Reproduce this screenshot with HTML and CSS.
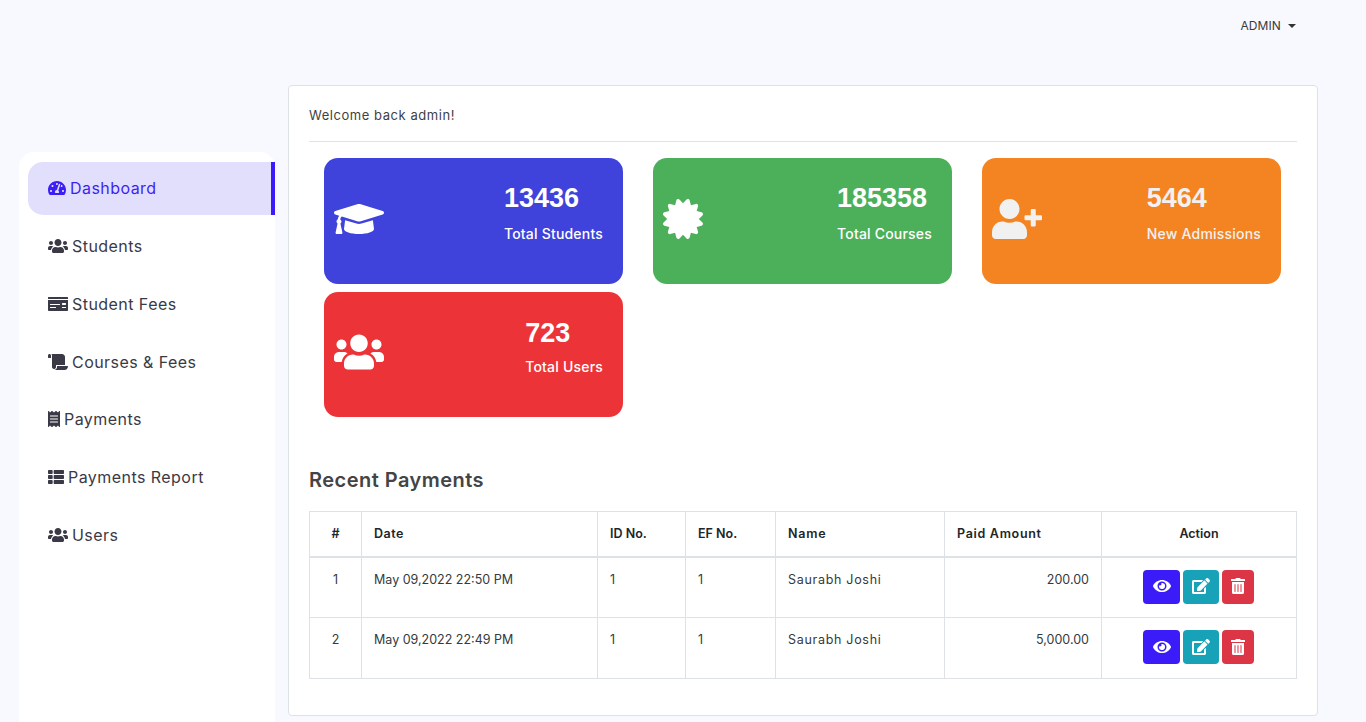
FILE: index.html
```html
<!DOCTYPE html>
<html lang="en">
<head>
<meta charset="utf-8">
<title>Dashboard</title>
<link rel="stylesheet" href="styles.css">
</head>
<body>
<svg class="sprites" width="0" height="0" aria-hidden="true">
<defs>
<symbol id="i-gauge" viewBox="0 0 576 512"><path d="M288 32C128.94 32 0 160.94 0 320c0 52.8 14.25 102.26 39.06 144.8 5.61 9.62 16.3 15.2 27.44 15.2h443c11.14 0 21.83-5.58 27.44-15.2C561.75 422.26 576 372.8 576 320c0-159.06-128.94-288-288-288zm0 64c14.71 0 26.58 10.13 30.32 23.65-1.11 2.26-2.64 4.23-3.45 6.67l-9.22 27.67c-5.13 3.49-10.97 6.01-17.64 6.01-17.67 0-32-14.33-32-32S270.33 96 288 96zM96 384c-17.67 0-32-14.33-32-32s14.33-32 32-32 32 14.33 32 32-14.33 32-32 32zm48-160c-17.67 0-32-14.33-32-32s14.33-32 32-32 32 14.33 32 32-14.33 32-32 32zm246.77-72.41l-61.33 184C343.13 347.33 352 364.54 352 384c0 11.72-3.38 22.55-8.88 32H232.88c-5.5-9.45-8.88-20.28-8.88-32 0-33.94 26.5-61.43 59.9-63.59l61.34-184.01c4.17-12.56 17.73-19.45 30.36-15.17 12.57 4.19 19.35 17.79 15.17 30.36zm14.66 57.2l15.52-46.55c3.47-1.29 7.13-2.23 11.05-2.23 17.67 0 32 14.33 32 32s-14.33 32-32 32c-11.38-.01-20.89-6.28-26.57-15.22zM480 384c-17.67 0-32-14.33-32-32s14.33-32 32-32 32 14.33 32 32-14.33 32-32 32z"/></symbol>
<symbol id="i-users" viewBox="0 0 640 512"><path d="M96 224c35.3 0 64-28.7 64-64s-28.7-64-64-64-64 28.7-64 64 28.7 64 64 64zm448 0c35.3 0 64-28.7 64-64s-28.7-64-64-64-64 28.7-64 64 28.7 64 64 64zm32 32h-64c-17.6 0-33.5 7.1-45.1 18.6 40.3 22.1 68.9 62 75.1 109.4h66c17.7 0 32-14.3 32-32v-32c0-35.3-28.7-64-64-64zm-256 0c61.9 0 112-50.1 112-112S381.9 32 320 32 208 82.1 208 144s50.1 112 112 112zm76.8 32h-8.3c-20.8 10-43.9 16-68.5 16s-47.6-6-68.5-16h-8.3C179.6 288 128 339.6 128 403.2V432c0 26.5 21.5 48 48 48h288c26.5 0 48-21.5 48-48v-28.8c0-63.6-51.6-115.2-115.2-115.2zm-223.7-13.4C161.5 263.1 145.6 256 128 256H64c-35.3 0-64 28.7-64 64v32c0 17.7 14.3 32 32 32h65.9c6.3-47.4 34.9-87.3 75.2-109.4z"/></symbol>
<symbol id="i-check" viewBox="0 0 640 512"><path d="M0 448c0 17.67 14.33 32 32 32h576c17.67 0 32-14.33 32-32V128H0v320zm448-208c0-8.84 7.16-16 16-16h96c8.84 0 16 7.16 16 16v32c0 8.84-7.16 16-16 16h-96c-8.84 0-16-7.16-16-16v-32zm0 120c0-4.42 3.58-8 8-8h112c4.42 0 8 3.58 8 8v16c0 4.42-3.58 8-8 8H456c-4.42 0-8-3.58-8-8v-16zM64 264c0-4.42 3.58-8 8-8h304c4.42 0 8 3.58 8 8v16c0 4.42-3.58 8-8 8H72c-4.42 0-8-3.58-8-8v-16zm0 96c0-4.42 3.58-8 8-8h176c4.42 0 8 3.58 8 8v16c0 4.42-3.58 8-8 8H72c-4.42 0-8-3.58-8-8v-16zM624 32H16C7.16 32 0 39.16 0 48v48h640V48c0-8.84-7.16-16-16-16z"/></symbol>
<symbol id="i-scroll" viewBox="0 0 640 512"><path d="M48 0C21.53 0 0 21.53 0 48v64c0 8.84 7.16 16 16 16h80V48C96 21.53 74.47 0 48 0zm208 412.57V352h288V96c0-52.94-43.06-96-96-96H111.59C121.74 13.41 128 29.92 128 48v368c0 38.87 34.66 69.65 74.77 63.12C234.27 474 256 444.46 256 412.57zM288 384v32c0 52.93-43.06 96-96 96h336c61.86 0 112-50.14 112-112 0-8.84-7.16-16-16-16H288z"/></symbol>
<symbol id="i-receipt" viewBox="0 0 384 512"><path d="M358.4 3.2L320 48 265.6 3.2a15.9 15.9 0 0 0-19.2 0L192 48 137.6 3.2a15.9 15.9 0 0 0-19.2 0L64 48 25.6 3.2C15-4.7 0 2.8 0 16v480c0 13.2 15 20.7 25.6 12.8L64 464l54.4 44.8a15.9 15.9 0 0 0 19.2 0L192 464l54.4 44.8a15.9 15.9 0 0 0 19.2 0L320 464l38.4 44.8c10.5 7.9 25.6.4 25.6-12.8V16c0-13.2-15-20.7-25.6-12.8zM320 360c0 4.4-3.6 8-8 8H72c-4.4 0-8-3.6-8-8v-16c0-4.4 3.6-8 8-8h240c4.4 0 8 3.6 8 8v16zm0-96c0 4.4-3.6 8-8 8H72c-4.4 0-8-3.6-8-8v-16c0-4.4 3.6-8 8-8h240c4.4 0 8 3.6 8 8v16zm0-96c0 4.4-3.6 8-8 8H72c-4.4 0-8-3.6-8-8v-16c0-4.4 3.6-8 8-8h240c4.4 0 8 3.6 8 8v16z"/></symbol>
<symbol id="i-list" viewBox="0 0 512 512"><path d="M149.333 216v80c0 13.255-10.745 24-24 24H24c-13.255 0-24-10.745-24-24v-80c0-13.255 10.745-24 24-24h101.333c13.255 0 24 10.745 24 24zM0 376v80c0 13.255 10.745 24 24 24h101.333c13.255 0 24-10.745 24-24v-80c0-13.255-10.745-24-24-24H24c-13.255 0-24 10.745-24 24zM125.333 32H24C10.745 32 0 42.745 0 56v80c0 13.255 10.745 24 24 24h101.333c13.255 0 24-10.745 24-24V56c0-13.255-10.745-24-24-24zm80 448H488c13.255 0 24-10.745 24-24v-80c0-13.255-10.745-24-24-24H205.333c-13.255 0-24 10.745-24 24v80c0 13.255 10.745 24 24 24zm-24-424v80c0 13.255 10.745 24 24 24H488c13.255 0 24-10.745 24-24V56c0-13.255-10.745-24-24-24H205.333c-13.255 0-24 10.745-24 24zm24 264H488c13.255 0 24-10.745 24-24v-80c0-13.255-10.745-24-24-24H205.333c-13.255 0-24 10.745-24 24v80c0 13.255 10.745 24 24 24z"/></symbol>
<symbol id="i-eye" viewBox="0 0 576 512"><path d="M572.52 241.4C518.29 135.59 410.93 64 288 64S57.68 135.64 3.48 241.41a32.35 32.35 0 0 0 0 29.19C57.71 376.41 165.07 448 288 448s230.32-71.64 284.52-177.41a32.35 32.35 0 0 0 0-29.19zM288 400a144 144 0 1 1 144-144 143.93 143.93 0 0 1-144 144zm0-240a95.31 95.31 0 0 0-25.31 3.79 47.85 47.85 0 0 1-66.9 66.9A95.78 95.78 0 1 0 288 160z"/></symbol>
<symbol id="i-edit" viewBox="0 0 576 512"><path d="M402.6 83.2l90.2 90.2c3.8 3.8 3.8 10 0 13.8L274.4 405.6l-92.8 10.3c-12.4 1.4-22.9-9.1-21.5-21.5l10.3-92.8L388.8 83.2c3.8-3.8 10-3.8 13.8 0zm162-22.9l-48.8-48.8c-15.2-15.2-39.9-15.2-55.2 0l-35.4 35.4c-3.8 3.8-3.8 10 0 13.8l90.2 90.2c3.8 3.8 10 3.8 13.8 0l35.4-35.4c15.2-15.3 15.2-40 0-55.2zM384 346.2V448H64V128h229.8c3.2 0 6.2-1.3 8.5-3.5l40-40c7.6-7.6 2.2-20.5-8.5-20.5H48C21.5 64 0 85.5 0 112v352c0 26.5 21.5 48 48 48h352c26.5 0 48-21.5 48-48V306.2c0-10.7-12.9-16-20.5-8.5l-40 40c-2.2 2.3-3.5 5.3-3.5 8.5z"/></symbol>
<symbol id="i-trash" viewBox="0 0 448 512"><path d="M32 464a48 48 0 0 0 48 48h288a48 48 0 0 0 48-48V128H32zm272-256a16 16 0 0 1 32 0v224a16 16 0 0 1-32 0zm-96 0a16 16 0 0 1 32 0v224a16 16 0 0 1-32 0zm-96 0a16 16 0 0 1 32 0v224a16 16 0 0 1-32 0zM432 32H312l-9.4-18.7A24 24 0 0 0 281.1 0H166.8a23.72 23.72 0 0 0-21.4 13.3L136 32H16A16 16 0 0 0 0 48v32a16 16 0 0 0 16 16h416a16 16 0 0 0 16-16V48a16 16 0 0 0-16-16z"/></symbol>
</defs>
</svg>

<header class="topbar">
  <span class="user-menu">ADMIN<span class="caret"></span></span>
</header>

<div class="layout">
  <nav class="sidebar">
    <a class="nav-item active"><svg class="nav-icon w18"><use href="#i-gauge"/></svg><span>Dashboard</span></a>
    <a class="nav-item"><svg class="nav-icon w20"><use href="#i-users"/></svg><span>Students</span></a>
    <a class="nav-item"><svg class="nav-icon w20"><use href="#i-check"/></svg><span>Student Fees</span></a>
    <a class="nav-item"><svg class="nav-icon w20"><use href="#i-scroll"/></svg><span>Courses &amp; Fees</span></a>
    <a class="nav-item"><svg class="nav-icon w12"><use href="#i-receipt"/></svg><span>Payments</span></a>
    <a class="nav-item"><svg class="nav-icon w16"><use href="#i-list"/></svg><span>Payments Report</span></a>
    <a class="nav-item"><svg class="nav-icon w20"><use href="#i-users"/></svg><span>Users</span></a>
  </nav>

  <main class="panel">
    <p class="welcome">Welcome back admin!</p>
    <hr class="rule">

    <section class="stats">
      <div class="stat blue">
        <svg class="stat-icon wide" viewBox="0 0 640 512"><path d="M622.34 153.2L343.4 67.5c-15.2-4.67-31.6-4.67-46.79 0L17.66 153.2c-23.54 7.23-23.54 38.36 0 45.59l48.63 14.94c-10.67 13.19-17.23 29.28-17.88 46.9C38.78 266.15 32 276.11 32 288c0 10.78 5.68 19.85 13.86 25.65L20.33 428.53C18.11 438.52 25.71 448 35.94 448h56.11c10.24 0 17.84-9.48 15.62-19.47L82.14 313.65C90.32 307.85 96 298.78 96 288c0-11.57-6.47-21.25-15.66-26.87.76-15.02 8.44-28.3 20.69-36.72L296.6 284.5c9.06 2.78 26.44 6.25 46.79 0l278.95-85.7c23.55-7.24 23.55-38.36 0-45.6zM352.79 315.09c-28.53 8.76-52.84 3.92-65.59 0l-145.02-44.55L128 384c0 35.35 85.96 64 192 64s192-28.65 192-64l-14.18-113.47-145.03 44.56z"/></svg>
        <div class="stat-text"><div class="stat-num">13436</div><div class="stat-label">Total Students</div></div>
      </div>
      <div class="stat green">
        <svg class="stat-icon square" viewBox="0 0 512 512"><path d="M458.622 255.92l45.985-45.005c13.708-12.977 7.316-36.039-10.664-40.339l-62.65-15.99 17.661-62.015c4.991-17.838-11.829-34.663-29.661-29.671l-61.994 17.667-15.984-62.671C337.085.197 313.765-6.276 300.99 7.228L256 53.57 211.011 7.229c-12.63-13.351-36.047-7.234-40.325 10.668l-15.984 62.671-61.995-17.667C74.87 57.907 58.056 74.738 63.046 92.572l17.661 62.015-62.65 15.99C.069 174.878-6.31 197.944 7.392 210.915l45.985 45.005-45.985 45.004c-13.708 12.977-7.316 36.039 10.664 40.339l62.65 15.99-17.661 62.015c-4.991 17.838 11.829 34.663 29.661 29.671l61.994-17.667 15.984 62.671c4.439 18.575 27.696 24.018 40.325 10.668L256 458.61l44.989 46.001c12.5 13.488 35.987 7.486 40.325-10.668l15.984-62.671 61.994 17.667c17.836 4.994 34.651-11.837 29.661-29.671l-17.661-62.015 62.65-15.99c17.987-4.302 24.366-27.367 10.664-40.339l-45.984-45.004z"/></svg>
        <div class="stat-text"><div class="stat-num">185358</div><div class="stat-label">Total Courses</div></div>
      </div>
      <div class="stat orange">
        <svg class="stat-icon wide soft" viewBox="0 0 640 512"><path d="M624 208h-64v-64c0-8.8-7.2-16-16-16h-32c-8.8 0-16 7.2-16 16v64h-64c-8.8 0-16 7.2-16 16v32c0 8.8 7.2 16 16 16h64v64c0 8.8 7.2 16 16 16h32c8.8 0 16-7.2 16-16v-64h64c8.8 0 16-7.2 16-16v-32c0-8.8-7.2-16-16-16zm-400 48c70.7 0 128-57.3 128-128S294.7 0 224 0 96 57.3 96 128s57.3 128 128 128zm89.6 32h-16.7c-22.2 10.2-46.9 16-72.9 16s-50.6-5.8-72.9-16h-16.7C60.2 288 0 348.2 0 422.4V464c0 26.5 21.5 48 48 48h352c26.5 0 48-21.5 48-48v-41.6c0-74.2-60.2-134.4-134.4-134.4z"/></svg>
        <div class="stat-text soft-text"><div class="stat-num">5464</div><div class="stat-label">New Admissions</div></div>
      </div>
      <div class="stat red">
        <svg class="stat-icon wide"><use href="#i-users"/></svg>
        <div class="stat-text"><div class="stat-num">723</div><div class="stat-label">Total Users</div></div>
      </div>
    </section>

    <h2 class="section-title">Recent Payments</h2>

    <table class="payments">
      <thead>
        <tr>
          <th class="c-num center">#</th><th class="c-date">Date</th><th class="c-id">ID No.</th><th class="c-ef">EF No.</th><th class="c-name">Name</th><th class="c-paid">Paid Amount</th><th class="c-act center">Action</th>
        </tr>
      </thead>
      <tbody>
        <tr class="row">
          <td class="center">1</td><td>May 09,2022 22:50 PM</td><td>1</td><td>1</td><td class="person">Saurabh Joshi</td><td class="right">200.00</td>
          <td class="center"><div class="actions">
            <span class="btn b-view"><svg class="i-eye"><use href="#i-eye"/></svg></span><span class="btn b-edit"><svg class="i-edit"><use href="#i-edit"/></svg></span><span class="btn b-del"><svg class="i-trash"><use href="#i-trash"/></svg></span>
          </div></td>
        </tr>
        <tr class="row">
          <td class="center">2</td><td>May 09,2022 22:49 PM</td><td>1</td><td>1</td><td class="person">Saurabh Joshi</td><td class="right">5,000.00</td>
          <td class="center"><div class="actions">
            <span class="btn b-view"><svg class="i-eye"><use href="#i-eye"/></svg></span><span class="btn b-edit"><svg class="i-edit"><use href="#i-edit"/></svg></span><span class="btn b-del"><svg class="i-trash"><use href="#i-trash"/></svg></span>
          </div></td>
        </tr>
      </tbody>
    </table>
  </main>
</div>
</body>
</html>
```
FILE: styles.css
```css
* { box-sizing: border-box; }
html, body { margin: 0; height: 722px; overflow: hidden; }
body {
  background: #f8f9fe;
  font-family: Inter, "Open Sans", "Liberation Sans", sans-serif;
  color: #343a40;
}
.sprites { display: block; }

.topbar {
  height: 85px;
  display: flex;
  justify-content: flex-end;
  padding: 18px 70px 0 0;
}
.user-menu {
  display: flex;
  align-items: center;
  height: 15px;
  font-size: 12px;
  color: #3a3a3a;
  letter-spacing: 0.1px;
}
.caret {
  margin-left: 7px;
  border-top: 4px solid #333;
  border-left: 4px solid transparent;
  border-right: 4px solid transparent;
}

.layout { display: flex; align-items: flex-start; padding-left: 19px; }

.sidebar {
  width: 256px;
  height: 570px;
  margin-top: 67px;
  margin-right: 13px;
  padding: 10px 0 0 9px;
  background: #fff;
  border-radius: 15px 15px 0 0;
  display: flex;
  flex-direction: column;
  gap: 4.75px;
}
.nav-item {
  height: 53px;
  display: flex;
  align-items: center;
  gap: 4px;
  padding: 0 0 0.5px 20px;
  font-size: 16px;
  color: #3a3a46;
  letter-spacing: 0.45px;
}
.nav-item.active {
  background: #e2dffc;
  color: #3d1ff5;
  border-right: 4px solid #3b1cf8;
  border-radius: 15px 0 0 15px;
}
.nav-icon { height: 16px; fill: currentColor; flex: none; }
.w18 { width: 18px; }
.w20 { width: 20px; }
.w12 { width: 12px; }
.w16 { width: 16px; }

.panel {
  width: 1030px;
  height: 631px;
  padding: 19px 20px 20px;
  background: #fff;
  border: 1px solid #dee2e6;
  border-radius: 4px;
}
.welcome { margin: 0; font-size: 13px; line-height: 20px; color: #3f3f3f; letter-spacing: 0.55px; }
.rule { margin: 16px 0 16px; border: 0; border-top: 1px solid #e2e2e2; }

.stats {
  display: grid;
  grid-template-columns: repeat(3, 299px);
  column-gap: 30px;
  row-gap: 8px;
  padding-left: 15px;
}
.stat {
  height: 126px;
  display: flex;
  align-items: center;
  justify-content: space-between;
  padding: 0 20px 0 10px;
  border-radius: 14px;
  color: #fff;
}
.stat.red { height: 125px; }
.blue { background: #3f42db; }
.green { background: #4caf5a; }
.orange { background: #f48322; }
.red { background: #ec3438; }
.stat-icon { fill: #fff; height: 40px; flex: none; margin-top: -4px; }
.stat.red .stat-icon { margin-top: -6px; }
.stat-icon.wide { width: 50px; }
.stat-icon.square { width: 40px; }
.stat-icon.soft { fill: #f1f1f1; }
.soft-text { color: #f1f1f1; }
.stat-text { margin-top: -15px; }
.stat-num {
  font-family: "Liberation Sans", Arial, sans-serif;
  font-size: 27px;
  font-weight: 700;
  line-height: 31px;
}
.stat-label { margin-top: 9px; font-size: 14px; line-height: 21px; font-weight: 450; letter-spacing: 0.2px; }
.stat.red .stat-text { margin-top: -14px; }
.stat.red .stat-label { margin-top: 7px; }

.section-title {
  margin: 50px 0 18px;
  font-size: 20px;
  line-height: 26px;
  font-weight: 600;
  letter-spacing: 0.47px;
  color: #444;
}

.payments {
  width: 987px;
  border-collapse: collapse;
  table-layout: fixed;
  font-size: 12.5px;
  color: #343a40;
}
.payments th, .payments td {
  border: 1px solid #dee2e6;
  padding: 12px;
  text-align: left;
  vertical-align: top;
}
.payments th {
  height: 45px;
  padding-top: 10px;
  padding-bottom: 10px;
  font-weight: 600;
  color: #212529;
  vertical-align: middle;
  border-bottom-width: 2px;
}
.payments td { line-height: 20px; }
.row { height: 61px; }
.payments .center { text-align: center; }
.payments .right { text-align: right; }
.payments .person { letter-spacing: 0.7px; }
.c-num { width: 52px; }
.c-date { width: 236px; letter-spacing: 0.5px; }
.c-id { width: 88px; }
.c-ef { width: 90px; }
.c-name { width: 169px; letter-spacing: 0.8px; }
.c-paid { width: 157px; letter-spacing: 0.7px; }
.c-act { width: 195px; }

.actions { display: flex; justify-content: center; gap: 3px; margin-right: 1px; }
.btn {
  height: 34px;
  padding-bottom: 1px;
  display: flex;
  align-items: center;
  justify-content: center;
  border-radius: 4px;
  color: #fff;
  fill: #fff;
}
.b-view { width: 37px; background: #3b1cf8; }
.b-edit { width: 36px; background: #17a2b8; }
.b-del { width: 32px; background: #dc3545; }
.i-eye { width: 18px; height: 16px; }
.i-edit { width: 18px; height: 16px; }
.i-trash { width: 14px; height: 16px; }
```
